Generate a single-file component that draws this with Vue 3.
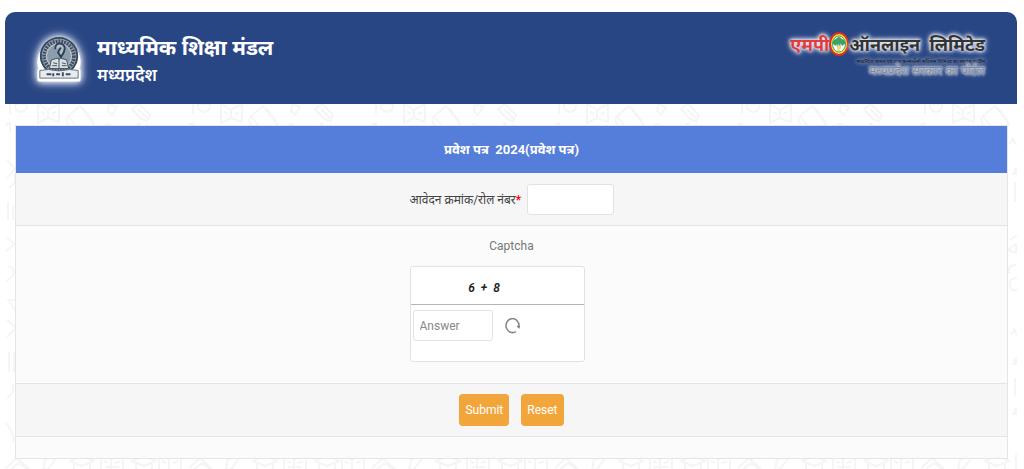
<script setup>
import { ref } from 'vue'

const rollNumber = ref('')
const answer     = ref('')
const first      = ref(6)
const second     = ref(8)

function refresh() {
  first.value  = Math.floor(Math.random() * 9) + 1
  second.value = Math.floor(Math.random() * 9) + 1
  answer.value = ''
}

function reset() {
  rollNumber.value = ''
  answer.value = ''
}
</script>

<template>
  <div class="page">
    <!-- doodle wallpaper -->
    <svg class="wallpaper" aria-hidden="true">
      <defs>
        <pattern id="doodles" width="183" height="430" patternUnits="userSpaceOnUse">
          <g fill="none" stroke="#f5f5f5" stroke-width="2" stroke-linejoin="round">
            <path d="M5 92v10M10 94a6 6 0 1 0 12 0v-2h-12z" />
            <path d="M33 92l10 6 11-6v18l-11-4-10 5zM43 98v9M36 100l4 2M47 102l4-2" />
            <path d="M63 104l12-10 14 18-12 10zM78 96l10 13M62 105q-2 5 2 8" />
            <path d="M104 92l8 3-5 8-4-4zM134 92l11 11-3 6-6-2-9-10zM133 97l9 9" />
            <path d="M103 119q-7-5 0-7 6 1 3 7M128 118l6-7 4 8 5-7M36 121l3-7 7 2" />
            <path d="M0 113l5-2v9M89 132l5-5M91 126l6 7M2 148l8 9-8 9M4 176q9-6 5-14M93 162l3-6v6z" />
            <path d="M3 190v18M8 194v14M95 170v20M2 226l8 6-9 7M88 238l8-6v9zM90 228l7-5" />
            <path d="M3 254q8 2 5 10l-7 5M90 262q-4-9 6-9M97 266q-9 0-7 9 4 7 8 1" />
            <path d="M3 288h10l-3 10zM2 308l9 8-9 9M91 322l5-5M93 316l5 8M93 352l3-6v6z" />
            <path d="M4 340v20M9 340v20M95 366v18M2 386q9-6 5-14M1 411q9 10 7 20M93 402l3-6v6z" />
            <path d="M1 26l11-10 12 11M5 28l9-7 8 6M40 17l12-2-9 12-5 1z" />
            <path d="M65 19l12-5 12 5-12 5zM69 22v6q8 4 16 0v-6" />
            <path d="M96 13l10 4 12-4v18h-22zM106 17v11M99 19l4 2M110 21l5-2M100 25h14" />
            <path d="M127 19l12-5 12 5-12 5zM131 22v6q8 4 16 0v-6" />
            <path d="M154 13l10 4 12-4v18h-22zM164 17v11M157 19l4 2M168 21l5-2" />
          </g>
        </pattern>
      </defs>
      <rect width="100%" height="100%" fill="url(#doodles)" />
    </svg>

    <header class="banner">
      <div class="board">
        <svg class="emblem" viewBox="0 0 48 52" role="img" aria-label="MP Board">
          <path d="M5 39a21 21 0 1 1 38 0h2v10H3V39z" fill="#fff" stroke="#fff" stroke-width="3" stroke-linejoin="round" />
          <circle cx="24" cy="24" r="19" fill="#a5b2bd" stroke="#344861" stroke-width="2" />
          <circle cx="24" cy="24" r="15.500" fill="none" stroke="#405067" stroke-width="4" stroke-dasharray="2 1" />
          <circle cx="24" cy="24" r="13" fill="#8c9dad" stroke="#c3cbd0" />
          <path d="M20 17q0-7 6-6 6 2 3 9l-3 5-3-5 3-5" fill="#b8c1c7" stroke="#2b3f59" stroke-width="2" />
          <path d="M16 28l7-2 1 2 1-2 7 2 2 9H14zM24 28v9M18 31l4 1M27 31l4 1M17 34h5M27 34h5" fill="#d9dedf" stroke="#3e5063" />
          <path d="M4 39l9-1q11 3 22 0l9 1v8H4z" fill="#e8ecee" stroke="#5f6e7b" />
          <path d="M11 43h5M18 42v3M21 43h4M28 41v4M31 43h5" stroke="#3d4b5a" stroke-width="2" />
        </svg>
        <div class="board-name">
          <h1>माध्यमिक शिक्षा मंडल</h1>
          <p>मध्यप्रदेश</p>
        </div>
      </div>

      <div class="portal">
        <div class="portal-name">
          <span class="portal-mp">एमपी</span>
          <svg class="portal-seal" viewBox="0 0 20 24" aria-hidden="true">
            <ellipse cx="10" cy="12" rx="9" ry="11" fill="#f1e332" stroke="#d92c2c" stroke-width="2" />
            <ellipse cx="10" cy="12" rx="6.500" ry="8" fill="#fff" stroke="#42a354" />
            <path d="M4 12q-1-4 3-5 3-4 6 0 4 1 3 5l-3 2-1-2-1 6H9l-1-6-1 2z" fill="#3fa164" />
            <path d="M9 11l1 3 2-3-1 8H8z" fill="#eadb9b" />
          </svg>
          <span>ऑनलाइन&nbsp; लिमिटेड</span>
        </div>
        <div class="portal-venture">मध्यप्रदेश शासन एवं टाटा कन्सल्टेंसी सर्विसेस लिमिटेड का संयुक्त उपक्रम</div>
        <div class="portal-tag">मध्यप्रदेश सरकार का पोर्टल</div>
      </div>
    </header>

    <form class="panel" @submit.prevent>
      <h2 class="title">प्रवेश पत्र&nbsp; 2024(प्रवेश पत्र)</h2>

      <div class="row row-shade">
        <div class="fields roll">
          <label for="roll">आवेदन क्रमांक/रोल नंबर<span class="required">*</span></label>
          <input id="roll" v-model="rollNumber" class="box" type="text">
        </div>
      </div>

      <div class="row captcha-row">
        <div class="fields">
          <label class="captcha-label" for="answer">Captcha</label>
          <div class="captcha">
            <div class="sum">{{ first }} + {{ second }}</div>
            <div class="reply">
              <input id="answer" v-model="answer" class="box" type="text" placeholder="Answer">
              <button class="refresh" type="button" aria-label="Refresh captcha" @click="refresh">
                <svg viewBox="0 0 16 16" aria-hidden="true">
                  <path d="M11 13.500A6.500 7 0 1 1 14 8v1M12 8l2 1.500.5-2" fill="none" stroke="#858585" stroke-width="1.500" />
                </svg>
              </button>
            </div>
          </div>
        </div>
      </div>

      <div class="row row-shade actions">
        <button class="btn" type="submit">Submit</button>
        <button class="btn" type="button" @click="reset">Reset</button>
      </div>
      <div class="row row-end"></div>
    </form>
  </div>
</template>

<style>
body {
  margin: 0;
  background: #fff;
}
</style>

<style scoped>
.page {
  position: relative;
  box-sizing: border-box;
  min-height: 100vh;
  padding: 12px 7px 11px 5px;
  font-family: Roboto, 'Noto Sans', sans-serif;
  font-size: 12px;
  color: #444;
}

.page * { box-sizing: border-box; }

.wallpaper {
  position: absolute;
  inset: 12px 7px 0 5px;
  width: calc(100% - 12px);
  height: calc(100% - 12px);
}

/* ── Banner ── */
.banner {
  position: relative;
  display: flex;
  justify-content: space-between;
  height: 92px;
  padding: 0 32px 0 31px;
  background: #294684;
  border-radius: 10px 10px 0 0;
}

.board {
  display: flex;
  align-items: center;
  gap: 15px;
}

.emblem {
  width: 46px;
  height: 50px;
  filter: drop-shadow(0 0 3px #fff) drop-shadow(0 0 5px #c5d0e6);
}

.board-name {
  padding-top: 6px;
  color: #fff;
  font-family: 'Noto Sans', sans-serif;
}

.board-name h1 {
  margin: 0;
  font-size: 21px;
  line-height: 28px;
  font-weight: 700;
}

.board-name p {
  margin: 0;
  font-size: 17px;
  line-height: 28px;
  font-weight: 600;
}

.portal {
  padding-top: 18px;
  text-align: right;
  color: #333;
  font-family: 'Noto Sans', sans-serif;
  white-space: nowrap;
}

/* the halo sits on each line, so the dark text stays readable on blue */
.portal-name {
  display: flex;
  align-items: center;
  justify-content: flex-end;
  font-size: 18px;
  line-height: 28px;
  font-weight: 700;
  text-shadow: 0 0 3px #fff, 0 0 4px #dbe2f0, 0 0 5px #b9c6df, 0 0 6px #b9c6df;
}

.portal-mp { color: #e33b3b; }

.portal-seal {
  width: 20px;
  height: 24px;
}

.portal-venture {
  font-size: 5px;
  line-height: 6px;
  color: #111;
  text-shadow: 0 0 4px #b9c6df, 0 0 5px #b9c6df;
}

.portal-tag {
  font-size: 12px;
  line-height: 14px;
  color: #7f8798;
  text-shadow: 0 0 2px #e4e9f3, 0 0 3px #dbe2f0, 0 0 4px #b9c6df;
}

/* ── Form ── */
.panel {
  position: relative;
  margin: 21px 9px 0 10px;
  border: 1px solid #e5e5e5;
  background: #fbfbfb;
}

.title {
  margin: 0;
  background: #557dda;
  color: #fff;
  font-size: 13px;
  line-height: 47px;
  font-weight: 700;
  text-align: center;
}

.row {
  display: flex;
  justify-content: center;
  border-bottom: 1px solid #e4e4e4;
}

.row-shade { background: #f6f6f6; }

.fields { width: 204px; }

.roll {
  display: flex;
  align-items: center;
  justify-content: space-between;
  height: 52px;
  white-space: nowrap;
}

.required {
  color: #f00;
  font-weight: 700;
}

.box {
  height: 31px;
  border: 1px solid #e2e2e2;
  border-radius: 3px;
  background: #fff;
  font: inherit;
  color: #444;
}

.roll .box { width: 87px; }

.captcha-row { padding: 10px 0 21px; }

.captcha-label {
  display: block;
  margin-bottom: 9px;
  line-height: 21px;
  text-align: center;
  color: #777;
}

.captcha {
  width: 175px;
  height: 96px;
  border: 1px solid #e2e2e2;
  border-radius: 3px;
  background: #fff;
}

.sum {
  padding: 5px 26px 0 0;
  border-bottom: 1px solid #b5b5b5;
  line-height: 32px;
  font-style: italic;
  font-weight: 600;
  text-align: center;
  word-spacing: 3px;
  color: #222;
}

.reply {
  display: flex;
  align-items: center;
  gap: 12px;
  padding: 5px 2px;
}

.reply .box {
  width: 80px;
  padding: 0 6px;
}

.reply .box::placeholder { color: #888; }

.refresh {
  width: 16px;
  height: 16px;
  padding: 0;
  border: 0;
  background: none;
  cursor: pointer;
}

.refresh svg { display: block; }

.actions {
  gap: 12px;
  padding: 10px 0;
}

.btn {
  height: 32px;
  padding: 0 6px;
  border: 0;
  border-radius: 4px;
  background: #f2a53a;
  color: #fff;
  font: inherit;
  cursor: pointer;
}

.row-end {
  height: 21px;
  border-bottom: 0;
}
</style>
